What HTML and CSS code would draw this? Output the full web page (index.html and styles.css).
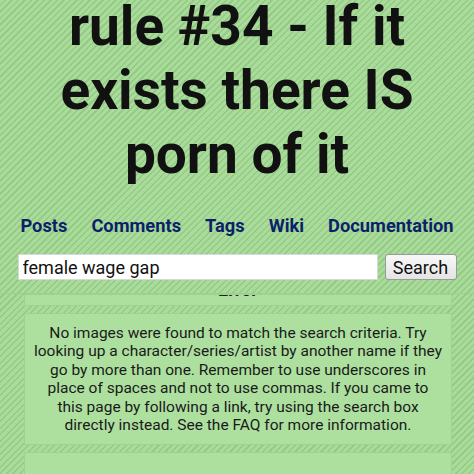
FILE: index.html
```html
<!DOCTYPE html>
<html>
<head>
<meta charset="utf-8">
<link rel="stylesheet" href="styles.css">
</head>
<body>
<header class="head">
  <h1 class="title">rule #34 - If it exists there IS porn of it</h1>
  <nav class="nav">
    <a href="#">Posts</a>
    <a href="#">Comments</a>
    <a href="#">Tags</a>
    <a href="#">Wiki</a>
    <a href="#">Documentation</a>
  </nav>
  <form class="search">
    <input class="field" type="text" value="female wage gap">
    <button class="btn" type="button">Search</button>
  </form>
</header>
<main class="main">
  <section class="panel panel-top"><h3 class="err">Error</h3></section>
  <section class="panel panel-msg">
    <p>No images were found to match the search criteria. Try<br>looking up a character/series/artist by another name if they<br>go by more than one. Remember to use underscores in<br>place of spaces and not to use commas. If you came to<br>this page by following a link, try using the search box<br>directly instead. See the FAQ for more information.</p>
  </section>
  <section class="panel panel-bottom"></section>
</main>
</body>
</html>
```
FILE: styles.css
```css
html, body {
  margin: 0;
  padding: 0;
  height: 100%;
  overflow: hidden;
}
body {
  font-family: Roboto, "Liberation Sans", sans-serif;
  background: repeating-linear-gradient(135deg, #a9dc9b 0 3px, #95cb86 3px 4.6px);
  color: #111;
}
.head {
  display: flex;
  flex-direction: column;
  align-items: center;
}
.title {
  margin: -6px 0 0;
  width: 400px;
  text-align: center;
  font-size: 55px;
  line-height: 64px;
  font-weight: 700;
  color: #111;
}
.nav {
  display: flex;
  gap: 24px;
  margin-top: 29px;
}
.nav a {
  font-size: 18.3px;
  font-weight: 700;
  color: #0d1f6b;
  text-decoration: none;
}
.search {
  display: flex;
  gap: 7px;
  margin: 18px 0 0;
}
.field {
  width: 360px;
  height: 26px;
  box-sizing: border-box;
  border: 1px solid #d8d8d8;
  background: #fff;
  padding: 0 4px;
  font-family: Roboto, "Liberation Sans", sans-serif;
  font-size: 18px;
  color: #111;
  margin: 0;
}
.btn {
  width: 72px;
  height: 26px;
  box-sizing: border-box;
  border: 1px solid #9a9a9a;
  border-radius: 3px;
  background: linear-gradient(#f8f8f8, #e4e4e4);
  font-family: Roboto, "Liberation Sans", sans-serif;
  font-size: 18px;
  color: #111;
  padding: 0;
  margin: 0;
}
.main {
  margin-top: 13px;
  border-top: 1px solid #9dcf90;
  padding: 0 22px 0 24px;
  display: flex;
  flex-direction: column;
  gap: 7px;
}
.panel {
  background: #ade09f;
  border: 1px solid #9fd291;
  box-sizing: border-box;
}
.panel-top {
  height: 12px;
  overflow: hidden;
}
.err {
  margin: -15px 0 0;
  text-align: center;
  font-size: 18px;
  line-height: 20px;
  font-weight: 700;
  color: #222;
}
.panel-msg {
  padding: 10px 0 10px;
}
.panel-msg p {
  margin: 0;
  text-align: center;
  font-size: 15.5px;
  line-height: 18.4px;
  color: #1a1a1a;
}
.panel-bottom {
  height: 40px;
}
```
